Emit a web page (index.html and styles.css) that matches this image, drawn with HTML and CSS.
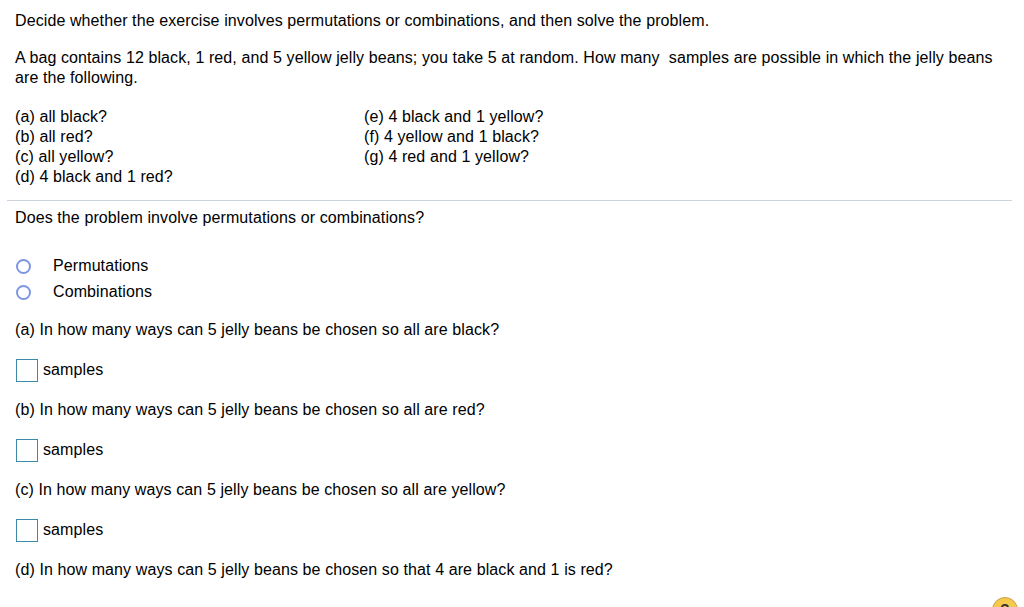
FILE: index.html
```html
<!DOCTYPE html>
<html>
<head>
<meta charset="utf-8">
<link rel="stylesheet" href="styles.css">
</head>
<body>
<div class="page">
  <p class="intro">Decide whether the exercise involves permutations or combinations, and then solve the problem.</p>
  <p class="problem">A bag contains 12 black, 1 red, and 5 yellow jelly beans; you take 5 at random. How many &nbsp;samples are possible in which the jelly beans are the following.</p>
  <div class="cases">
    <div class="col col-left">
      <div>(a) all black?</div>
      <div>(b) all red?</div>
      <div>(c) all yellow?</div>
      <div>(d) 4 black and 1 red?</div>
    </div>
    <div class="col">
      <div>(e) 4 black and 1 yellow?</div>
      <div>(f) 4 yellow and 1 black?</div>
      <div>(g) 4 red and 1 yellow?</div>
    </div>
  </div>
  <hr class="rule">
  <p class="question first">Does the problem involve permutations or combinations?</p>
  <div class="choices">
    <label class="choice"><span class="radio"></span><span>Permutations</span></label>
    <label class="choice"><span class="radio"></span><span>Combinations</span></label>
  </div>
  <p class="question">(a) In how many ways can 5 jelly beans be chosen so all are black?</p>
  <div class="answer"><span class="box"></span><span>samples</span></div>
  <p class="question">(b) In how many ways can 5 jelly beans be chosen so all are red?</p>
  <div class="answer"><span class="box"></span><span>samples</span></div>
  <p class="question">(c) In how many ways can 5 jelly beans be chosen so all are yellow?</p>
  <div class="answer"><span class="box"></span><span>samples</span></div>
  <p class="question">(d) In how many ways can 5 jelly beans be chosen so that 4 are black and 1 is red?</p>
  <p class="hint">Click to select your answer(s).</p>
</div>
<span class="help">?</span>
</body>
</html>
```
FILE: styles.css
```css
html, body {
  margin: 0;
  padding: 0;
  background: #fff;
  overflow: hidden;
  height: 607px;
}
body {
  font-family: "Liberation Sans", Arial, Helvetica, sans-serif;
  font-size: 16px;
  line-height: 20px;
  letter-spacing: 0.1px;
  color: #000;
}
.page {
  padding: 11px 12px 0 15px;
}
p {
  margin: 0;
}
.problem {
  margin-top: 17px;
  padding-right: 10px;
}
.cases {
  display: flex;
  margin-top: 19px;
}
.col-left {
  width: 349px;
}
.rule {
  border: 0;
  border-top: 1px solid #ccd3df;
  margin: 13px 0 0 -8px;
  width: 1005px;
}
.question.first {
  margin-top: 7px;
}
.choices {
  margin-top: 28px;
  display: flex;
  flex-direction: column;
  gap: 6px;
}
.choice {
  display: flex;
  align-items: center;
  gap: 22px;
  height: 20px;
}
.radio {
  display: inline-block;
  width: 11px;
  height: 11px;
  border: 2px solid #7e96e2;
  border-radius: 50%;
  margin-left: 1px;
}
.question {
  margin-top: 18px;
}
.answer {
  display: flex;
  align-items: center;
  gap: 5px;
  margin-top: 18px;
  height: 24px;
}
.box {
  display: inline-block;
  width: 20px;
  height: 21px;
  border: 1px solid #3c8aa6;
  margin-left: 1px;
}
.hint {
  margin-top: 26px;
  color: #555;
}
.help {
  position: absolute;
  left: 992px;
  top: 597px;
  width: 24px;
  height: 24px;
  border-radius: 50%;
  background: #f5c94e;
  border: 1px solid #c9a24a;
  color: #333;
  font-weight: bold;
  font-size: 15px;
  text-align: center;
  line-height: 22px;
}
```
